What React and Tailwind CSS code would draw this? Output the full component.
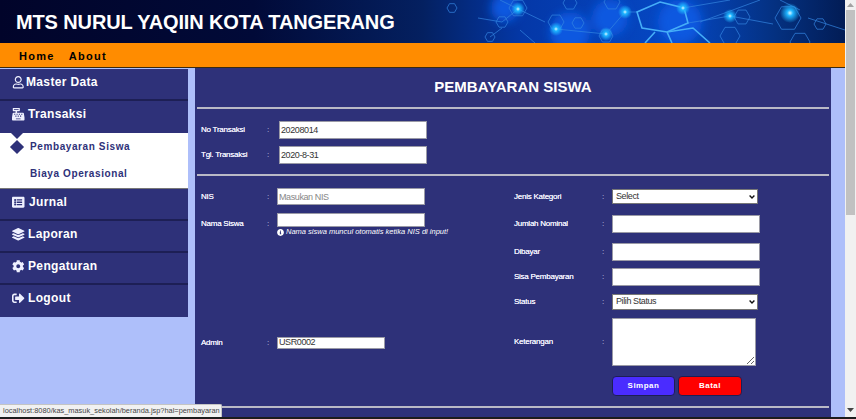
import React from "react";
import { FaRegUser, FaCashRegister, FaListAlt, FaLayerGroup, FaCog, FaInfoCircle, FaSignOutAlt } from "react-icons/fa";

const font = { fontFamily: '"Liberation Sans", Arial, sans-serif' };

function Banner() {
  const big = "660,2 684,8 688,23 667,32 642,28 637,12";
  const hexes = [
    [518, 8, 9], [556, 22, 8], [578, 23, 6], [606, 36, 7], [570, 3, 7], [502, 22, 6], [490, 37, 5],
    [742, 17, 8], [730, 36, 10], [788, 18, 13], [820, 24, 6], [800, 42, 10], [612, 2, 8], [452, 8, 5],
  ];
  const hexPts = (x, y, r) =>
    [0, 1, 2, 3, 4, 5].map((i) => {
      const a = (Math.PI / 3) * i;
      return `${x + r * Math.cos(a)},${y + r * Math.sin(a)}`;
    }).join(" ");
  const glows = [[518, 9], [556, 29], [606, 34], [625, 12], [683, 8], [730, 16], [790, 13]];
  return (
    <svg className="absolute inset-0" width="845" height="43" viewBox="0 0 845 43">
      <defs>
        <linearGradient id="bg" x1="0" x2="1" y1="0" y2="0">
          <stop offset="0" stopColor="#01042a" />
          <stop offset="0.3" stopColor="#010a38" />
          <stop offset="0.5" stopColor="#042060" />
          <stop offset="0.62" stopColor="#0438a8" />
          <stop offset="0.8" stopColor="#0548c4" />
          <stop offset="0.92" stopColor="#04307f" />
          <stop offset="1" stopColor="#021c55" />
        </linearGradient>
        <radialGradient id="glow">
          <stop offset="0" stopColor="#d8f6ff" />
          <stop offset="0.3" stopColor="#1eb4ff" />
          <stop offset="1" stopColor="#1eb4ff" stopOpacity="0" />
        </radialGradient>
        <filter id="soft"><feGaussianBlur stdDeviation="5" /></filter>
      </defs>
      <rect width="845" height="43" fill="url(#bg)" />
      <g filter="url(#soft)" fill="#0a58e0">
        <circle cx="570" cy="32" r="20" />
        <circle cx="610" cy="18" r="18" />
        <circle cx="505" cy="8" r="14" />
        <circle cx="680" cy="22" r="22" />
      </g>
      <g fill="none" stroke="#3484e0" strokeWidth="0.8" opacity="0.9">
        {hexes.map(([x, y, r], i) => <polygon key={i} points={hexPts(x, y, r)} />)}
        <path d="M518 9 L502 22 M518 9 L545 22 M518 9 L500 0 M556 29 L606 34 M606 34 L625 12 M625 12 L637 12 M683 8 L730 0 M688 23 L730 16 M730 16 L773 24 M808 18 L845 30 M800 10 L780 0 M478 18 L502 22 M490 37 L502 28 M520 30 L535 43 M700 22 L760 0" />
      </g>
      <g fill="none" stroke="#45aef8" strokeWidth="1.6">
        <polygon points={big} />
        <path d="M667 32 L693 28 L710 43 M655 32 L645 43 M667 32 L672 43" />
      </g>
      {glows.map(([x, y], i) => (
        <circle key={i} cx={x} cy={y} r={i === 6 ? 10 : 7} fill="url(#glow)" />
      ))}
    </svg>
  );
}

function MenuItem({ icon, label, gap, last, plain }) {
  const border = last || plain ? "" : "border-b-2 border-[#1d1f55]";
  return (
    <div className={`h-[32px] flex items-start ${gap} pl-[12px] pt-[6px] bg-[#2e3179] ${border} text-white text-[12px] leading-[15px] font-bold tracking-[0.35px]`}>
      <span className="w-[12.5px] h-[15px] flex items-center justify-center text-[#eef0ff] text-[12.5px]">{icon}</span>
      <span>{label}</span>
    </div>
  );
}

const inputCls = "block bg-white border border-[#9a9aa6] px-[1px] text-[9px] tracking-[-0.4px] text-[#333] outline-none";

function Label({ children, w, colonW }) {
  return (
    <>
      <span className={`${w} text-[#f0f0ff] text-[8px] tracking-[-0.25px] [text-shadow:0_0_0.5px_#ffffff]`}>{children}</span>
      <span className={`${colonW} text-[#c8c9e8] text-[8px]`}>:</span>
    </>
  );
}

function Hr() {
  return <div className="h-[2px] bg-[#b9b9c6] mx-[2px]" />;
}

function Select({ text, height }) {
  return (
    <div className="relative w-[146px]">
      <select defaultValue={text} className={`block appearance-none w-full ${height} bg-white border border-[#777] pl-[3px] text-[9px] tracking-[-0.4px] text-[#333]`} style={font}>
        <option>{text}</option>
      </select>
      <svg className="absolute right-[3px] top-1/2 -translate-y-1/2" width="6" height="4" viewBox="0 0 6 4">
        <path d="M0.6 0.6 L3 3 L5.4 0.6" fill="none" stroke="#111" strokeWidth="1.4" />
      </svg>
    </div>
  );
}

export default function App() {
  return (
    <div className="relative w-[856px] h-[419px] overflow-hidden bg-[#aebffa] flex flex-col" style={font}>
      <div className="flex flex-1 min-h-0">
        <div className="w-[845px] flex flex-col">
          <header className="relative h-[43px] shrink-0">
            <Banner />
            <h1 className="relative pl-[16px] pt-[10px] text-white text-[20px] leading-[24px] font-bold tracking-[-0.13px]">
              MTS NURUL YAQIIN KOTA TANGERANG
            </h1>
          </header>
          <nav className="h-[25px] shrink-0 bg-[#ff8c00] border-b border-[#3a2a10] flex items-center gap-[14px] pl-[19px] pt-[3px] text-black text-[11px] font-bold tracking-[1.3px]">
            <span>Home</span>
            <span>About</span>
          </nav>
          <div className="flex-1 min-h-0 flex">
            <aside className="w-[188px] shrink-0 self-start mt-px">
              <MenuItem icon={<FaRegUser />} label="Master Data" gap="gap-[1.5px]" />
              <MenuItem icon={<FaCashRegister />} label="Transaksi" gap="gap-[3.5px]" plain />
              <div className="relative h-[56px] bg-white border-b border-[#777] text-[#2e3179] text-[10px] font-bold tracking-[0.6px]">
                <div className="absolute left-[11px] top-0 w-0 h-0 border-x-[6px] border-x-transparent border-t-[6px] border-t-[#2e3179]" />
                <div className="absolute left-[12px] top-[9px] w-[10px] h-[10px] rotate-45 bg-[#2e3179]" />
                <div className="pl-[30px] pt-[7px] leading-[13px]">Pembayaran Siswa</div>
                <div className="pl-[30px] pt-[14px] leading-[13px]">Biaya Operasional</div>
              </div>
              <MenuItem icon={<FaListAlt />} label="Jurnal" gap="gap-[4.5px]" />
              <MenuItem icon={<FaLayerGroup />} label="Laporan" gap="gap-[3.5px]" />
              <MenuItem icon={<FaCog />} label="Pengaturan" gap="gap-[3.5px]" />
              <MenuItem icon={<FaSignOutAlt />} label="Logout" gap="gap-[3.5px]" last />
            </aside>
            <main className="ml-[7px] w-[636px] bg-[#2e3179]">
              <div className="h-[39px] flex items-center justify-center pb-[1px] text-white text-[15px] font-bold">PEMBAYARAN SISWA</div>
              <Hr />
              <div className="h-[65px] pl-[6px] pt-[12px] flex flex-col gap-[7px]">
                <div className="flex items-center h-[18px]">
                  <Label w="w-[66px]" colonW="w-[12px]">No Transaksi</Label>
                  <input readOnly value="20208014" className={`${inputCls} w-[148px] h-[18px]`} />
                </div>
                <div className="flex items-center h-[18px]">
                  <Label w="w-[66px]" colonW="w-[12px]">Tgl. Transaksi</Label>
                  <input readOnly value="2020-8-31" className={`${inputCls} w-[148px] h-[18px]`} />
                </div>
              </div>
              <Hr />
              <div className="flex h-[230px] pl-[6px] pt-[12px]">
                <div className="w-[313px] flex flex-col">
                  <div className="flex items-center h-[17px]">
                    <Label w="w-[66px]" colonW="w-[10px]">NIS</Label>
                    <input readOnly placeholder="Masukan NIS" className={`${inputCls} w-[148px] h-[17px] placeholder:text-[#888]`} />
                  </div>
                  <div className="flex mt-[8px]">
                    <div className="flex h-[14px] items-center pt-[8px]">
                      <Label w="w-[66px]" colonW="w-[10px]">Nama Siswa</Label>
                    </div>
                    <div>
                      <input readOnly className={`${inputCls} w-[148px] h-[14px]`} />
                      <div className="flex items-center gap-[2px] mt-[1px] h-[8px] text-white text-[7.5px] italic whitespace-nowrap">
                        <FaInfoCircle className="text-[7px]" />
                        <span>Nama siswa muncul otomatis ketika NIS di input!</span>
                      </div>
                    </div>
                  </div>
                  <div className="flex items-center h-[12px] mt-[101px]">
                    <Label w="w-[66px]" colonW="w-[10px]">Admin</Label>
                    <input readOnly value="USR0002" className={`${inputCls} w-[108px] h-[12px] text-[#222]`} />
                  </div>
                </div>
                <div className="flex flex-col pt-px">
                  <div className="flex items-center h-[15px]">
                    <Label w="w-[88px]" colonW="w-[10px]">Jenis Kategori</Label>
                    <Select text="Select" height="h-[15px]" />
                  </div>
                  <div className="flex items-center h-[18px] mt-[11px]">
                    <Label w="w-[88px]" colonW="w-[10px]">Jumlah Nominal</Label>
                    <input readOnly className={`${inputCls} w-[148px] h-[18px]`} />
                  </div>
                  <div className="flex items-center h-[18px] mt-[10px]">
                    <Label w="w-[88px]" colonW="w-[10px]">Dibayar</Label>
                    <input readOnly className={`${inputCls} w-[148px] h-[18px]`} />
                  </div>
                  <div className="flex items-center h-[18px] mt-[7px]">
                    <Label w="w-[88px]" colonW="w-[10px]">Sisa Pembayaran</Label>
                    <input readOnly className={`${inputCls} w-[148px] h-[18px]`} />
                  </div>
                  <div className="flex items-center h-[16px] mt-[8px]">
                    <Label w="w-[88px]" colonW="w-[10px]">Status</Label>
                    <Select text="Pilih Status" height="h-[16px]" />
                  </div>
                  <div className="flex items-center h-[48px] mt-[8px]">
                    <Label w="w-[88px]" colonW="w-[10px]">Keterangan</Label>
                    <textarea readOnly className="block bg-white border border-[#9a9aa6] w-[144px] h-[48px] outline-none" />
                  </div>
                  <div className="flex gap-[3px] ml-[98px] mt-[10px]">
                    <button className="w-[63px] h-[20px] rounded-[4px] bg-[#4a2cff] border border-[#1d1f55] text-white text-[8px] font-bold tracking-[0.5px]">Simpan</button>
                    <button className="w-[64px] h-[20px] rounded-[4px] bg-[#ff0000] border border-[#1d1f55] text-white text-[8px] font-bold tracking-[0.5px]">Batal</button>
                  </div>
                </div>
              </div>
              <Hr />
            </main>
          </div>
        </div>
        <div className="w-[11px] bg-[#f1f1f1] flex flex-col items-center">
          <svg width="7" height="4" viewBox="0 0 7 4" className="mt-[3px]"><path d="M3.5 0 L7 4 L0 4 Z" fill="#a3a3a3" /></svg>
          <div className="w-[9px] h-[205px] mt-[3px] bg-[#c1c1c1]" />
          <svg width="7" height="4" viewBox="0 0 7 4" className="mt-auto mb-[5px]"><path d="M0 0 L7 0 L3.5 4 Z" fill="#444" /></svg>
        </div>
      </div>
      <div className="h-[2px] shrink-0 bg-[#1c1c1c]" />
      <div className="absolute left-0 bottom-[2px] h-[13px] w-[222px] bg-[#f1f1f1] border-t border-r border-[#c4c4c4] rounded-tr-[2px] pl-[3px] text-[#444] text-[7.4px] leading-[12px] whitespace-nowrap overflow-hidden">
        localhost:8080/kas_masuk_sekolah/beranda.jsp?hal=pembayaran
      </div>
    </div>
  );
}
